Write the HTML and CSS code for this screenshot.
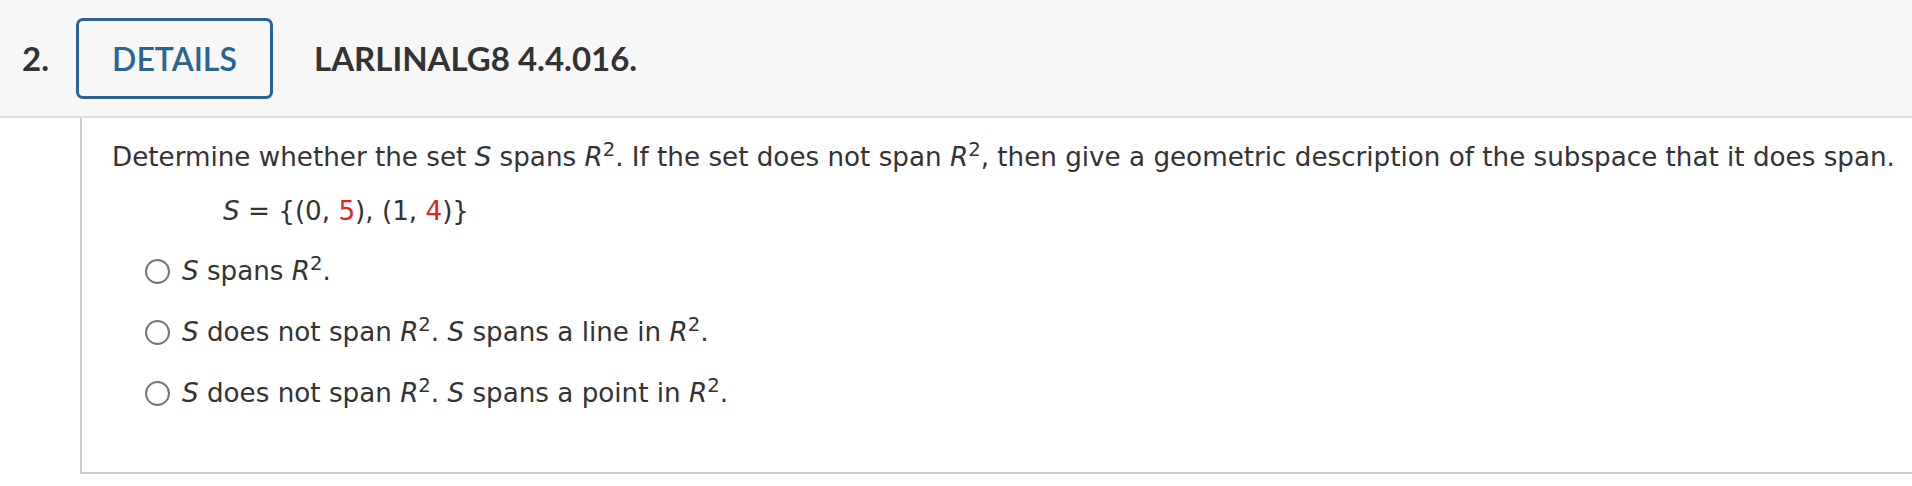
FILE: index.html
```html
<!DOCTYPE html>
<html>
<head>
<meta charset="utf-8">
<link rel="stylesheet" href="styles.css">
</head>
<body>
<div class="header">
  <span class="qnum">2.</span>
  <div class="details-btn">DETAILS</div>
  <span class="qid">LARLINALG8 4.4.016.</span>
</div>
<div class="content">
  <p class="prompt">Determine whether the set <i>S</i> spans <i>R</i><sup>2</sup>. If the set does not span <i>R</i><sup>2</sup>, then give a geometric description of the subspace that it does span.</p>
  <p class="setdef"><i>S</i> = {(0, <span class="red">5</span>), (1, <span class="red">4</span>)}</p>
  <div class="options">
    <label class="option"><span class="radio"></span><span><i>S</i> spans <i>R</i><sup>2</sup>.</span></label>
    <label class="option"><span class="radio"></span><span><i>S</i> does not span <i>R</i><sup>2</sup>. <i>S</i> spans a line in <i>R</i><sup>2</sup>.</span></label>
    <label class="option"><span class="radio"></span><span><i>S</i> does not span <i>R</i><sup>2</sup>. <i>S</i> spans a point in <i>R</i><sup>2</sup>.</span></label>
  </div>
</div>
</body>
</html>
```
FILE: styles.css
```css
html, body {
  margin: 0;
  padding: 0;
  background: #ffffff;
}
.header {
  height: 116px;
  background: #f7f7f7;
  border-bottom: 2px solid #dedede;
  display: flex;
  align-items: center;
  padding-left: 22px;
  font-family: Lato, "Liberation Sans", sans-serif;
}
.qnum {
  font-weight: 700;
  font-size: 33px;
  color: #333333;
}
.details-btn {
  margin-left: 27px;
  width: 191px;
  height: 75px;
  border: 3px solid #2b6395;
  border-radius: 7px;
  display: flex;
  align-items: center;
  justify-content: center;
  color: #2b6395;
  font-size: 32px;
  font-weight: 600;
}
.qid {
  margin-left: 41px;
  font-weight: 700;
  font-size: 33px;
  color: #333333;
}
.content {
  margin-left: 80px;
  height: 354px;
  border-left: 2px solid #cccccc;
  border-bottom: 2px solid #cccccc;
  padding-left: 30px;
  font-family: Verdana, "DejaVu Sans", sans-serif;
  font-size: 26.2px;
  color: #333333;
  box-sizing: content-box;
}
.prompt {
  margin: 0;
  padding-top: 24px;
  line-height: 30px;
  white-space: nowrap;
}
.setdef {
  margin: 24px 0 0 111px;
  line-height: 30px;
}
sup {
  font-size: 0.75em;
  line-height: 0;
  vertical-align: 0.5em;
}
.red {
  color: #e0261c;
}
.options {
  display: flex;
  flex-direction: column;
  gap: 31px;
  margin-top: 30px;
  padding-left: 33px;
}
.option {
  display: flex;
  align-items: center;
  gap: 12px;
  line-height: 30px;
}
.radio {
  width: 21px;
  height: 21px;
  border: 2px solid #767676;
  border-radius: 50%;
  background: #fff;
  flex: none;
}
```
